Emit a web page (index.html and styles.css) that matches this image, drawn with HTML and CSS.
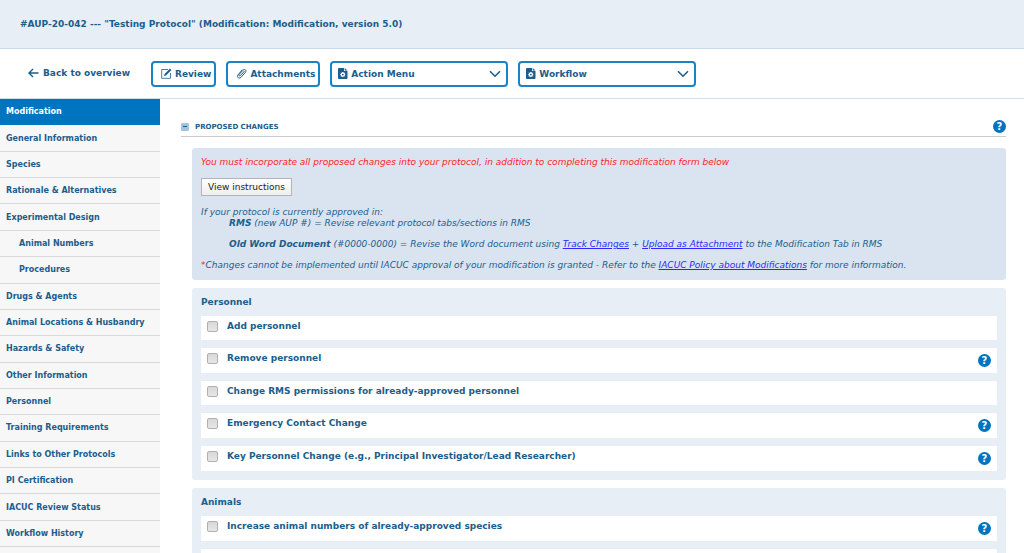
FILE: index.html
```html
<!DOCTYPE html>
<html lang="en">
<head>
<meta charset="utf-8">
<title>AUP-20-042 Testing Protocol</title>
<link rel="stylesheet" href="styles.css">
</head>
<body>
<svg class="defs" aria-hidden="true">
  <symbol id="doc" viewBox="0 0 10 11">
    <path fill="currentColor" d="M0 1q0-1 1-1h5v3h3.500v7q0 1-1 1H1q-1 0-1-1zM6.700 0 9.500 2.400H6.700z"/>
    <circle cx="4.800" cy="6.600" r="1.600" fill="none" stroke="#fff" stroke-width="1.300"/>
    <path stroke="#fff" stroke-width=".8" d="M4.800 4v1M4.800 8.200v1M2.300 6.600h1M6.300 6.600h1M3 4.800l.7.700M5.900 7.700l.7.700M6.600 4.800l-.7.700M3.700 7.700l-.7.700"/>
  </symbol>
  <symbol id="chevron" viewBox="0 0 12 8"><path d="M1 1.200 6 6.200 11 1.200" fill="none" stroke="currentColor" stroke-width="1.600"/></symbol>
</svg>
<div class="app">
  <header class="title-bar"><h1 class="title">#AUP-20-042 --- "Testing Protocol" (Modification: Modification, version 5.0)</h1></header>
  <div class="toolbar">
    <a class="back" href="#overview"><svg class="icon-back" viewBox="0 0 11 10" aria-hidden="true"><path d="M10.500 5H1M5 1 1 5l4 4" fill="none" stroke="currentColor" stroke-width="1.400"/></svg>Back to overview</a>
    <button class="tool" type="button"><svg class="icon" viewBox="0 0 11 11" aria-hidden="true"><path d="M7 1.500H.7v8.800h8.800V5" fill="none" stroke="currentColor" stroke-width=".8"/><path d="M3 8l.6-2L9 .6l1.400 1.400L5 7.400z" fill="currentColor"/></svg>Review</button>
    <button class="tool" type="button"><svg class="icon" viewBox="0 0 11 11" aria-hidden="true"><path d="M8.400 3.200 4.300 7.700c-.8.800-2-.2-1.200-1.100L7 2.200C8.400.5 11 2.200 9.500 4.200L5 9.300c-2 2-4.800-.3-3-2.500L6.200 2" fill="none" stroke="currentColor" stroke-width="1" stroke-linecap="round"/></svg>Attachments</button>
    <button class="tool tool-menu" type="button" aria-haspopup="menu"><svg class="icon-doc" aria-hidden="true"><use href="#doc"/></svg>Action Menu<svg class="chevron" aria-hidden="true"><use href="#chevron"/></svg></button>
    <button class="tool tool-menu" type="button" aria-haspopup="menu"><svg class="icon-doc" aria-hidden="true"><use href="#doc"/></svg>Workflow<svg class="chevron" aria-hidden="true"><use href="#chevron"/></svg></button>
  </div>
  <div class="body">
    <nav class="sidebar" aria-label="Protocol sections">
      <a class="nav-item active" href="#modification" aria-current="page">Modification</a>
      <a class="nav-item" href="#general">General Information</a>
      <a class="nav-item" href="#species">Species</a>
      <a class="nav-item" href="#rationale">Rationale &amp; Alternatives</a>
      <a class="nav-item" href="#design">Experimental Design</a>
      <a class="nav-item sub" href="#numbers">Animal Numbers</a>
      <a class="nav-item sub" href="#procedures">Procedures</a>
      <a class="nav-item" href="#drugs">Drugs &amp; Agents</a>
      <a class="nav-item" href="#locations">Animal Locations &amp; Husbandry</a>
      <a class="nav-item" href="#hazards">Hazards &amp; Safety</a>
      <a class="nav-item" href="#other">Other Information</a>
      <a class="nav-item" href="#personnel">Personnel</a>
      <a class="nav-item" href="#training">Training Requirements</a>
      <a class="nav-item" href="#links">Links to Other Protocols</a>
      <a class="nav-item" href="#pi">PI Certification</a>
      <a class="nav-item" href="#status">IACUC Review Status</a>
      <a class="nav-item" href="#history">Workflow History</a>
    </nav>
    <main class="content">
      <div class="section-head">
        <button class="collapse" type="button" aria-label="Collapse section"></button>
        <h2 class="section-title">PROPOSED CHANGES</h2>
        <button class="help" type="button">?</button>
      </div>
      <section class="panel notice">
        <p class="warning">You must incorporate all proposed changes into your protocol, in addition to completing this modification form below</p>
        <button class="instructions" type="button">View instructions</button>
        <p class="line">If your protocol is currently approved in:</p>
        <p class="line indent"><b>RMS</b> (new AUP #) = Revise relevant protocol tabs/sections in RMS</p>
        <p class="line indent spaced"><b>Old Word Document</b> (#0000-0000) = Revise the Word document using <a class="link" href="#track">Track Changes</a> + <a class="link" href="#upload">Upload as Attachment</a> to the Modification Tab in RMS</p>
        <p class="line spaced"><span class="star">*</span>Changes cannot be implemented until IACUC approval of your modification is granted - Refer to the <a class="link" href="#policy">IACUC Policy about Modifications</a> for more information.</p>
      </section>
      <section class="panel group">
        <h3 class="group-title">Personnel</h3>
        <div class="row"><label class="option"><input class="check" type="checkbox">Add personnel</label></div>
        <div class="row row-help"><label class="option"><input class="check" type="checkbox">Remove personnel</label><button class="help" type="button">?</button></div>
        <div class="row"><label class="option"><input class="check" type="checkbox">Change RMS permissions for already-approved personnel</label></div>
        <div class="row row-help"><label class="option"><input class="check" type="checkbox">Emergency Contact Change</label><button class="help" type="button">?</button></div>
        <div class="row row-help"><label class="option"><input class="check" type="checkbox">Key Personnel Change (e.g., Principal Investigator/Lead Researcher)</label><button class="help" type="button">?</button></div>
      </section>
      <section class="panel group">
        <h3 class="group-title">Animals</h3>
        <div class="row row-help"><label class="option"><input class="check" type="checkbox">Increase animal numbers of already-approved species</label><button class="help" type="button">?</button></div>
        <div class="row"></div>
      </section>
    </main>
  </div>
</div>
</body>
</html>
```

FILE: styles.css
```css
* { box-sizing: border-box; }
body { margin: 0; background: #fff; color: #1c5d8c; font-family: "DejaVu Sans", Verdana, sans-serif; font-size: 9px; }
h1, h2, h3, p { margin: 0; }
button { font-family: inherit; cursor: pointer; }
.defs { display: none; }
.app { height: 100vh; display: flex; flex-direction: column; }

.title-bar { flex: none; height: 49px; padding: 0 20px; display: flex; align-items: center; background: #e7eef6; border-bottom: 1px solid #c8d9ea; }
.title { font-size: 9px; line-height: 12px; font-weight: bold; }

.toolbar { flex: none; height: 50px; padding: 0 28px; display: flex; align-items: center; gap: 10px; border-bottom: 1px solid #cfdeed; }
.back { display: flex; align-items: center; gap: 4px; margin-right: 11px; padding-bottom: 2px; color: inherit; font-weight: bold; font-size: 9px; text-decoration: none; }
.icon-back { width: 11px; height: 10px; }
.tool { height: 26px; padding: 0 3px 0 8px; display: flex; align-items: center; gap: 3px; background: #fff; border: 2px solid #1b82c6; border-radius: 4px; color: inherit; font-weight: bold; font-size: 9px; white-space: nowrap; }
.tool-menu { width: 178px; padding: 0 5px 0 6px; }
.icon { width: 11px; height: 11px; }
.icon-doc { width: 10px; height: 11px; }
.chevron { width: 12px; height: 8px; margin-left: auto; }

.body { flex: 1; min-height: 0; display: flex; }
.sidebar { flex: none; width: 160px; padding-bottom: 6px; display: flex; flex-direction: column; background: #f7f7f7; overflow: hidden; }
.nav-item { flex: 1 0 26px; padding: 0 6px; display: flex; align-items: center; border-bottom: 1px solid #d8d8d8; color: inherit; font-size: 8px; font-weight: bold; text-decoration: none; white-space: nowrap; }
.nav-item.active { background: #0074bf; border-color: #0074bf; color: #fff; }
.nav-item.sub { padding-left: 19px; }

.content { flex: 1; min-width: 0; padding: 18px 18px 0 21px; overflow-y: auto; scrollbar-width: none; }
.section-head { height: 20px; display: flex; align-items: center; border-bottom: 1px solid #ccc; }
.collapse { position: relative; width: 8px; height: 8px; padding: 0; border: 1px solid #a6c3de; border-radius: 1px; background: #a6c3de; }
.collapse::after { content: ""; position: absolute; left: 1px; right: 1px; top: 2px; height: 1px; background: #1c5d8c; }
.section-title { flex: 1; margin-left: 6px; font-size: 7px; font-weight: bold; }
.help { flex: none; width: 13px; height: 13px; padding: 0; border: 0; border-radius: 50%; background: #0074bf; color: #fff; font-size: 10px; line-height: 13px; font-weight: bold; text-align: center; }

.panel { margin: 0 0 8px 11px; border-radius: 3px; }
.notice { margin-top: 11px; padding: 9px; background: #dae4f0; font-style: italic; }
.warning, .line { font-size: 9px; line-height: 11px; }
.warning { color: #ff1a2b; }
.instructions { display: block; height: 18px; margin: 10px 0 11px; padding: 0 6px; border: 1px solid #b4b4b4; background: linear-gradient(#fff, #eee); color: #222; font-size: 9px; }
.indent { margin-left: 28px; }
.spaced { margin-top: 10px; }
.link { color: #2a2aff; }
.star { color: #ff1a2b; }

.group { padding: 8px 9px 9px; display: flex; flex-direction: column; gap: 8px; background: #e7eef6; }
.group-title { font-size: 9px; line-height: 12px; font-weight: bold; }
.row { height: 24px; padding: 4px 6px; display: flex; align-items: flex-start; justify-content: space-between; background: #fff; }
.row-help { height: 25px; }
.row .help { align-self: center; }
.option { display: flex; align-items: center; gap: 9px; font-size: 9px; line-height: 12px; font-weight: bold; }
.check { appearance: none; width: 11px; height: 11px; margin: 0; border: 1px solid #b0b0b0; border-radius: 2px; background: linear-gradient(#d8d8d8, #e6e6e6); }
.check:checked { background: #0074bf; }
```
